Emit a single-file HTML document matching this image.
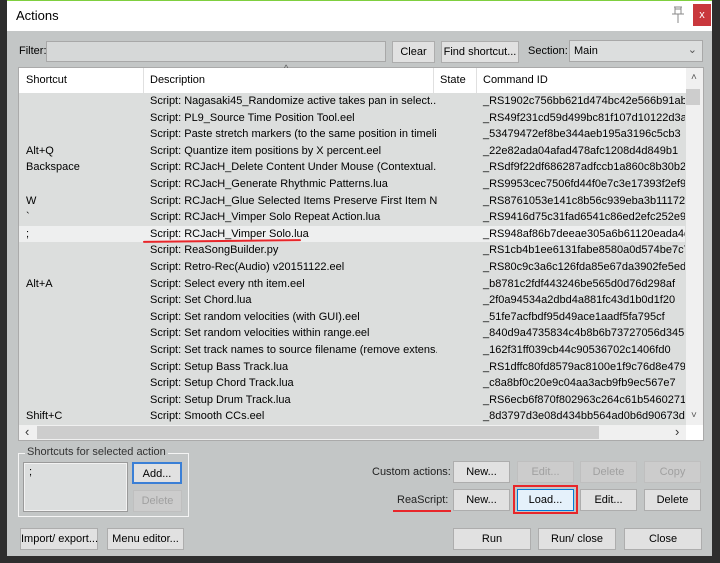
<!DOCTYPE html>
<html><head><style>
*{box-sizing:border-box;margin:0;padding:0}
body{width:720px;height:563px;background:#2e2e2e;position:relative;overflow:hidden;font-family:"Liberation Sans",sans-serif;font-size:11px;color:#000}
.a{position:absolute;white-space:nowrap}
.btn{position:absolute;background:#e1e1e1;border:1px solid #adadad;text-align:center;line-height:20px;height:22px;font-size:11px;white-space:nowrap}
.dis{color:#a0a0a0;background:#cccccc;border-color:#bfbfbf}
.row{position:absolute;left:0;width:666px;height:16.6px;line-height:16.6px;white-space:nowrap;overflow:hidden}
.row span{position:absolute;top:0}
.c1{left:7px}.c2{left:131px;width:287px;overflow:hidden}.c4{left:464px}
</style></head><body>
<div class="a" style="left:7px;top:0;width:705px;height:556px;background:#c3c6c6"></div>
<div class="a" style="left:7px;top:0;width:705px;height:1px;background:#7fcf3f"></div>
<div class="a" style="left:7px;top:1px;width:705px;height:30px;background:#fff"></div>
<div class="a" style="left:16px;top:8px;font-size:13px">Actions</div>
<svg class="a" style="left:670px;top:6px" width="16" height="18" viewBox="0 0 16 18"><path d="M4 1h8M5 1v7M11 1v7M2 8h12M8 8v9M5 3h6" stroke="#888" fill="none"/></svg>
<div class="a" style="left:693px;top:4px;width:18px;height:22px;background:#c9383d;color:#fff;text-align:center;line-height:22px;font-size:11px">x</div>
<div class="a" style="left:19px;top:45px">Filter:</div>
<div class="a" style="left:46px;top:41px;width:340px;height:21px;background:#d6d8d8;border:1px solid #a8a8a8"></div>
<div class="btn" style="left:392px;top:41px;width:43px">Clear</div>
<div class="btn" style="left:441px;top:41px;width:78px">Find shortcut...</div>
<div class="a" style="left:528px;top:45px">Section:</div>
<div class="a" style="left:569px;top:40px;width:134px;height:22px;background:#dcdede;border:1px solid #a8a8a8;padding:4px 4px">Main<span style="position:absolute;right:5px;top:2px;color:#555">&#8964;</span></div>
<!-- list -->
<div class="a" style="left:18px;top:67px;width:686px;height:374px;background:#fff;border:1px solid #aaa"></div>
<div class="a" style="left:19px;top:68px;width:667px;height:25px;background:#fff"></div>
<div class="a" style="left:143px;top:68px;width:1px;height:25px;background:#e0e0e0"></div>
<div class="a" style="left:433px;top:68px;width:1px;height:25px;background:#e0e0e0"></div>
<div class="a" style="left:476px;top:68px;width:1px;height:25px;background:#e0e0e0"></div>
<div class="a" style="left:26px;top:74px">Shortcut</div>
<div class="a" style="left:150px;top:74px">Description</div>
<div class="a" style="left:440px;top:74px">State</div>
<div class="a" style="left:483px;top:74px">Command ID</div>
<div class="a" style="left:284px;top:63px;font-size:9px;color:#555">^</div>
<div class="a" style="left:19px;top:93px;width:667px;height:332px;background:#dcdedd;overflow:hidden">
<div class="row" style="top:0"><span class="c2">Script: Nagasaki45_Randomize active takes pan in select...</span><span class="c4">_RS1902c756bb621d474bc42e566b91abfl</span></div>
<div class="row" style="top:16.6px"><span class="c2">Script: PL9_Source Time Position Tool.eel</span><span class="c4">_RS49f231cd59d499bc81f107d10122d3a2</span></div>
<div class="row" style="top:33.2px"><span class="c2">Script: Paste stretch markers (to the same position in timeli...</span><span class="c4">_53479472ef8be344aeb195a3196c5cb3</span></div>
<div class="row" style="top:49.8px"><span class="c1">Alt+Q</span><span class="c2">Script: Quantize item positions by X percent.eel</span><span class="c4">_22e82ada04afad478afc1208d4d849b1</span></div>
<div class="row" style="top:66.4px"><span class="c1">Backspace</span><span class="c2">Script: RCJacH_Delete Content Under Mouse (Contextual...</span><span class="c4">_RSdf9f22df686287adfccb1a860c8b30b22</span></div>
<div class="row" style="top:83px"><span class="c2">Script: RCJacH_Generate Rhythmic Patterns.lua</span><span class="c4">_RS9953cec7506fd44f0e7c3e17393f2ef95</span></div>
<div class="row" style="top:99.6px"><span class="c1">W</span><span class="c2">Script: RCJacH_Glue Selected Items Preserve First Item N...</span><span class="c4">_RS8761053e141c8b56c939eba3b11172e</span></div>
<div class="row" style="top:116.2px"><span class="c1">`</span><span class="c2">Script: RCJacH_Vimper Solo Repeat Action.lua</span><span class="c4">_RS9416d75c31fad6541c86ed2efc252e98</span></div>
<div class="row" style="top:132.8px;background:#eeefef"><span class="c1">;</span><span class="c2">Script: RCJacH_Vimper Solo.lua</span><span class="c4">_RS948af86b7deeae305a6b61120eada4d5</span></div>
<div class="row" style="top:149.4px"><span class="c2">Script: ReaSongBuilder.py</span><span class="c4">_RS1cb4b1ee6131fabe8580a0d574be7c71</span></div>
<div class="row" style="top:166px"><span class="c2">Script: Retro-Rec(Audio) v20151122.eel</span><span class="c4">_RS80c9c3a6c126fda85e67da3902fe5ed4</span></div>
<div class="row" style="top:182.6px"><span class="c1">Alt+A</span><span class="c2">Script: Select every nth item.eel</span><span class="c4">_b8781c2fdf443246be565d0d76d298af</span></div>
<div class="row" style="top:199.2px"><span class="c2">Script: Set Chord.lua</span><span class="c4">_2f0a94534a2dbd4a881fc43d1b0d1f20</span></div>
<div class="row" style="top:215.8px"><span class="c2">Script: Set random velocities (with GUI).eel</span><span class="c4">_51fe7acfbdf95d49ace1aadf5fa795cf</span></div>
<div class="row" style="top:232.4px"><span class="c2">Script: Set random velocities within range.eel</span><span class="c4">_840d9a4735834c4b8b6b73727056d345</span></div>
<div class="row" style="top:249px"><span class="c2">Script: Set track names to source filename (remove extens...</span><span class="c4">_162f31ff039cb44c90536702c1406fd0</span></div>
<div class="row" style="top:265.6px"><span class="c2">Script: Setup Bass Track.lua</span><span class="c4">_RS1dffc80fd8579ac8100e1f9c76d8e4794</span></div>
<div class="row" style="top:282.2px"><span class="c2">Script: Setup Chord Track.lua</span><span class="c4">_c8a8bf0c20e9c04aa3acb9fb9ec567e7</span></div>
<div class="row" style="top:298.8px"><span class="c2">Script: Setup Drum Track.lua</span><span class="c4">_RS6ecb6f870f802963c264c61b54602715</span></div>
<div class="row" style="top:315.4px"><span class="c1">Shift+C</span><span class="c2">Script: Smooth CCs.eel</span><span class="c4">_8d3797d3e08d434bb564ad0b6d90673d</span></div>
</div>
<div class="a" style="left:143px;top:240px;width:158px;height:2px;background:#e8262a;border-radius:1px;transform:rotate(-0.6deg)"></div>
<div class="a" style="left:686px;top:68px;width:17px;height:357px;background:#f0f0f0"></div>
<div class="a" style="left:686px;top:89px;width:14px;height:16px;background:#cdcdcd"></div>
<div class="a" style="left:691px;top:72px;font-size:10px;color:#555">&#708;</div>
<div class="a" style="left:691px;top:410px;font-size:10px;color:#555">&#709;</div>
<div class="a" style="left:19px;top:425px;width:667px;height:15px;background:#f0f0f0"></div>
<div class="a" style="left:37px;top:426px;width:562px;height:13px;background:#cdcdcd"></div>
<div class="a" style="left:25px;top:424px;font-size:13px;color:#333">&lsaquo;</div>
<div class="a" style="left:675px;top:424px;font-size:13px;color:#333">&rsaquo;</div>
<!-- shortcuts group -->
<div class="a" style="left:18px;top:453px;width:171px;height:64px;border:1px solid #f4f4f4"></div>
<div class="a" style="left:25px;top:446px;background:#c3c6c6;padding:0 2px;color:#333">Shortcuts for selected action</div>
<div class="a" style="left:24px;top:463px;width:103px;height:48px;background:#dcdede;border:1px solid #f2f2f2;outline:1px solid #9a9a9a;padding:2px 4px">;</div>
<div class="btn" style="left:132px;top:462px;width:50px;border:2px solid #3a7fd6">Add...</div>
<div class="btn dis" style="left:133px;top:490px;width:49px">Delete</div>
<div class="btn" style="left:20px;top:528px;width:78px">Import/ export...</div>
<div class="btn" style="left:107px;top:528px;width:77px">Menu editor...</div>
<!-- right buttons -->
<div class="a" style="left:372px;top:466px;color:#222">Custom actions:</div>
<div class="btn" style="left:453px;top:461px;width:57px">New...</div>
<div class="btn dis" style="left:517px;top:461px;width:57px">Edit...</div>
<div class="btn dis" style="left:580px;top:461px;width:57px">Delete</div>
<div class="btn dis" style="left:644px;top:461px;width:57px">Copy</div>
<div class="a" style="left:397px;top:494px;color:#222">ReaScript:</div>
<div class="a" style="left:393px;top:510px;width:58px;height:2px;background:#e8262a"></div>
<div class="btn" style="left:453px;top:489px;width:57px">New...</div>
<div class="a" style="left:513px;top:485px;width:65px;height:29px;border:2px solid #e8262a"></div>
<div class="btn" style="left:517px;top:489px;width:57px;background:#e5f1fb;border-color:#0078d7">Load...</div>
<div class="btn" style="left:580px;top:489px;width:57px">Edit...</div>
<div class="btn" style="left:644px;top:489px;width:57px">Delete</div>
<div class="btn" style="left:453px;top:528px;width:78px">Run</div>
<div class="btn" style="left:538px;top:528px;width:78px">Run/ close</div>
<div class="btn" style="left:624px;top:528px;width:78px">Close</div>
</body></html>
